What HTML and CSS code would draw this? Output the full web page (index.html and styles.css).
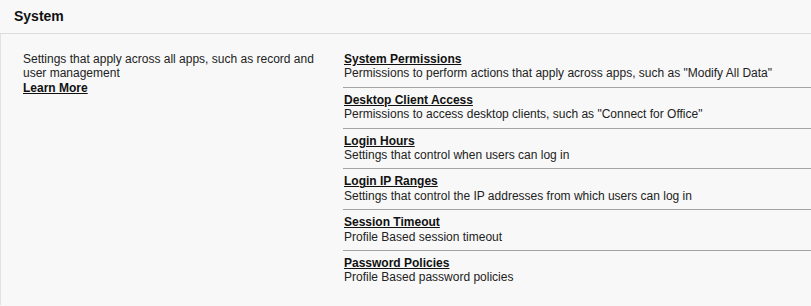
FILE: index.html
```html
<!DOCTYPE html>
<html>
<head>
<meta charset="utf-8">
<link rel="stylesheet" href="styles.css">
</head>
<body>
<div class="header">System</div>
<div class="content">
  <div class="intro">
    <div>Settings that apply across all apps, such as record and user management</div>
    <a class="link" href="#">Learn More</a>
  </div>
  <ul class="items">
    <li class="item"><a class="link" href="#">System Permissions</a><div>Permissions to perform actions that apply across apps, such as "Modify All Data"</div></li>
    <li class="item"><a class="link" href="#">Desktop Client Access</a><div>Permissions to access desktop clients, such as "Connect for Office"</div></li>
    <li class="item"><a class="link" href="#">Login Hours</a><div>Settings that control when users can log in</div></li>
    <li class="item"><a class="link" href="#">Login IP Ranges</a><div>Settings that control the IP addresses from which users can log in</div></li>
    <li class="item"><a class="link" href="#">Session Timeout</a><div>Profile Based session timeout</div></li>
    <li class="item"><a class="link" href="#">Password Policies</a><div>Profile Based password policies</div></li>
  </ul>
</div>
</body>
</html>
```
FILE: styles.css
```css
html, body {
  margin: 0;
  padding: 0;
  background: #f8f8f8;
}
body {
  font-family: "Liberation Sans", Arial, sans-serif;
  font-size: 12px;
  line-height: 14.4px;
  color: #222;
}
.header {
  height: 33px;
  line-height: 32px;
  padding: 0 14px;
  font-size: 14px;
  font-weight: bold;
  color: #111;
  border-bottom: 1px solid #dcdcdc;
}
.content {
  display: flex;
  padding-top: 13px;
  border-left: 1px solid #e2e2e2;
  min-height: 258px;
}
.intro {
  width: 305px;
  margin-left: 22px;
  margin-right: 15px;
  padding-top: 5px;
}
.link {
  display: inline-block;
  font-weight: bold;
  color: #111;
  text-decoration: underline;
}
.items {
  flex: 1;
  list-style: none;
  margin: 0;
  padding: 0;
}
.item {
  padding: 5px 0 6px 1px;
  border-bottom: 1px solid #a3a3a3;
}
.item:last-child {
  border-bottom: none;
}
```
